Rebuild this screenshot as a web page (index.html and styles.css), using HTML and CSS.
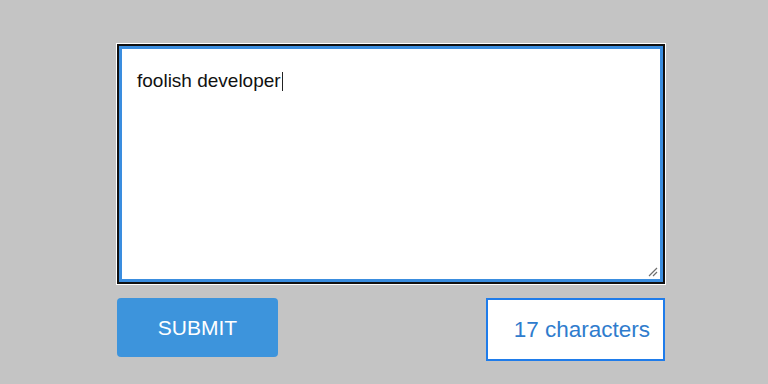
FILE: index.html
```html
<!DOCTYPE html>
<html>
<head>
<meta charset="utf-8">
<link rel="stylesheet" href="styles.css">
</head>
<body>
<div class="page">
  <div class="editor">
    <div class="text">foolish developer<span class="caret"></span></div>
    <svg class="grip" width="10" height="10" viewBox="0 0 10 10">
      <path d="M9 1 L1 9 M9 5 L5 9" stroke="#6e6e6e" stroke-width="1.2" fill="none"/>
    </svg>
  </div>
  <div class="actions">
    <button class="submit">SUBMIT</button>
    <div class="counter">17 characters</div>
  </div>
</div>
</body>
</html>
```
FILE: styles.css
```css
html, body {
  margin: 0;
  padding: 0;
  background: #c4c4c4;
  font-family: "Liberation Sans", Arial, sans-serif;
}
.page {
  padding: 46px 0 0 119px;
  width: 547px;
}
.editor {
  position: relative;
  box-sizing: border-box;
  width: 544px;
  height: 236px;
  background: #fff;
  border: 3px solid #3a8ddf;
  box-shadow: 0 0 0 2px #111, 0 0 0 3px #fff;
  padding: 21px 15px;
}
.text {
  font-size: 19px;
  color: #111;
  line-height: 22px;
}
.caret {
  display: inline-block;
  width: 1px;
  height: 19px;
  background: #222;
  vertical-align: -4px;
  margin-left: 1px;
}
.grip {
  position: absolute;
  right: 2px;
  bottom: 2px;
}
.actions {
  display: flex;
  justify-content: space-between;
  align-items: flex-start;
  margin-top: 16px;
  margin-left: -2px;
  width: 548px;
}
.submit {
  width: 161px;
  height: 59px;
  background: #3d94dc;
  color: #fff;
  border: none;
  border-radius: 4px;
  font-family: "Liberation Sans", Arial, sans-serif;
  font-size: 21px;
  padding: 0;
}
.counter {
  box-sizing: border-box;
  width: 179px;
  height: 63px;
  background: #fff;
  border: 2px solid #1f7cea;
  color: #2f7ccd;
  font-size: 22.5px;
  display: flex;
  align-items: center;
  justify-content: flex-end;
  padding-right: 13px;
}
```
